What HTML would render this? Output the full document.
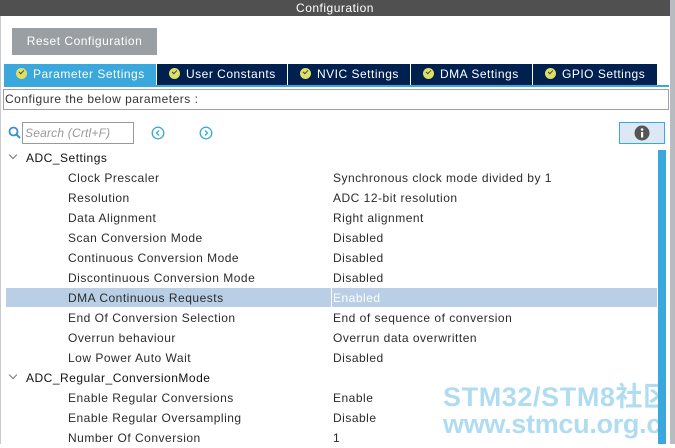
<!DOCTYPE html>
<html><head><meta charset="utf-8"><style>
*{margin:0;padding:0;box-sizing:border-box}
body{width:675px;height:444px;overflow:hidden;background:#fff;font-family:"Liberation Sans",sans-serif;position:relative;color:#2b2b2b;letter-spacing:0.5px}
.a{position:absolute;white-space:nowrap}
.title{left:0;top:0;width:670px;height:16px;background:#505050;color:#fff;font-size:12px;text-align:center;line-height:16px}
.tab{position:absolute;top:64px;height:21px;background:#002050;color:#fff;font-size:12px;line-height:21px;padding-left:12px}
.tab i{display:inline-block;width:11px;height:11px;border-radius:50%;background:#e0e060;vertical-align:-1px;margin-right:6px;position:relative}
.tab i:after{content:"";position:absolute;left:3px;top:2px;width:4px;height:2px;border-left:1.5px solid #446;border-bottom:1.5px solid #446;transform:rotate(-45deg)}
.row{position:absolute;left:0;height:20px;width:657px;font-size:12px;line-height:20px}
.row .k{position:absolute;left:68px}
.row .v{position:absolute;left:333px}
.g{position:absolute;left:26px;font-size:12px;line-height:20px;height:20px}
.chev{position:absolute;left:10px;width:6px;height:6px;border-right:1px solid #777;border-bottom:1px solid #777;transform:rotate(45deg)}
.wm{left:443px;font-size:27px;font-weight:bold;color:rgba(58,168,220,0.4);font-family:'Liberation Sans','Noto Sans CJK SC',sans-serif;line-height:30px;width:215px;overflow:hidden;letter-spacing:0.6px}
</style></head><body>
<div class="a" style="left:0;top:0;width:1px;height:444px;background:#c8ccd0"></div>
<div class="a title">Configuration</div>
<div class="a" style="left:670px;top:0;width:5px;height:444px;background:#b8bcc0"></div>
<div class="a" style="left:12px;top:28px;width:145px;height:27px;background:#9a9fa4;color:#fff;font-size:12px;line-height:27px;text-align:center">Reset Configuration</div>
<div class="tab" style="left:4px;width:152px;background:#3aa8dc"><i></i>Parameter Settings</div>
<div class="tab" style="left:157px;width:130px"><i></i>User Constants</div>
<div class="tab" style="left:288px;width:122px"><i></i>NVIC Settings</div>
<div class="tab" style="left:411px;width:121px"><i></i>DMA Settings</div>
<div class="tab" style="left:533px;width:124px"><i></i>GPIO Settings</div>
<div class="a" style="left:4px;top:85px;width:665px;height:2px;background:#3aa8dc"></div>
<div class="a" style="left:3px;top:89px;width:666px;height:21px;border:1px solid #a0a0a0;font-size:12px;line-height:19px;padding-left:1px;color:#333">Configure the below parameters :</div>
<svg class="a" style="left:8px;top:126px" width="14" height="14"><circle cx="5.5" cy="5.5" r="4" fill="none" stroke="#3a8fd0" stroke-width="1.8"/><path d="M8.5 8.5L12 12" stroke="#3a8fd0" stroke-width="2"/></svg>
<div class="a" style="left:22px;top:122px;width:112px;height:22px;border:1px solid #999;font-size:12px;line-height:20px;padding-left:2px;color:#999;font-style:italic;letter-spacing:0.2px">Search (Crtl+F)</div>
<svg class="a" style="left:151px;top:126px" width="14" height="14"><circle cx="7" cy="7" r="5.8" fill="none" stroke="#3aa8dc" stroke-width="1.3"/><path d="M8 4.5L5.5 7L8 9.5" fill="none" stroke="#3aa8dc" stroke-width="1.3"/></svg>
<svg class="a" style="left:199px;top:126px" width="14" height="14"><circle cx="7" cy="7" r="5.8" fill="none" stroke="#3aa8dc" stroke-width="1.3"/><path d="M6 4.5L8.5 7L6 9.5" fill="none" stroke="#3aa8dc" stroke-width="1.3"/></svg>
<div class="a" style="left:619px;top:122px;width:46px;height:22px;background:#dce8f4;border:1px solid #3aa8dc"></div>
<svg class="a" style="left:634px;top:125px" width="16" height="16"><circle cx="8" cy="8" r="7.5" fill="#555"/><rect x="7" y="7" width="2.2" height="5.5" fill="#fff"/><circle cx="8.1" cy="4.5" r="1.3" fill="#fff"/></svg>
<div class="a" style="left:658px;top:150px;width:8px;height:294px;background:#3aa8dc"></div>
<div class="a" style="left:6px;top:288px;width:651px;height:19px;background:#b8cfe6"></div>
<div class="a" style="left:331px;top:288px;width:1px;height:19px;background:#fff"></div>

<div class="chev" style="top:152px"></div><div class="g" style="top:148px;color:#111">ADC_Settings</div>
<div class="row" style="top:168px"><span class="k">Clock Prescaler</span><span class="v">Synchronous clock mode divided by 1</span></div>
<div class="row" style="top:188px"><span class="k">Resolution</span><span class="v">ADC 12-bit resolution</span></div>
<div class="row" style="top:208px"><span class="k">Data Alignment</span><span class="v">Right alignment</span></div>
<div class="row" style="top:228px"><span class="k">Scan Conversion Mode</span><span class="v">Disabled</span></div>
<div class="row" style="top:248px"><span class="k">Continuous Conversion Mode</span><span class="v">Disabled</span></div>
<div class="row" style="top:268px"><span class="k">Discontinuous Conversion Mode</span><span class="v">Disabled</span></div>
<div class="row" style="top:288px"><span class="k">DMA Continuous Requests</span><span class="v" style="color:#fff">Enabled</span></div>
<div class="row" style="top:308px"><span class="k">End Of Conversion Selection</span><span class="v">End of sequence of conversion</span></div>
<div class="row" style="top:328px"><span class="k">Overrun behaviour</span><span class="v">Overrun data overwritten</span></div>
<div class="row" style="top:348px"><span class="k">Low Power Auto Wait</span><span class="v">Disabled</span></div>
<div class="chev" style="top:372px"></div><div class="g" style="top:368px;color:#111">ADC_Regular_ConversionMode</div>
<div class="row" style="top:388px"><span class="k">Enable Regular Conversions</span><span class="v">Enable</span></div>
<div class="row" style="top:408px"><span class="k">Enable Regular Oversampling</span><span class="v">Disable</span></div>
<div class="row" style="top:428px"><span class="k">Number Of Conversion</span><span class="v">1</span></div>

<div class="a wm" style="top:382px">STM32/STM8社区</div>
<div class="a wm" style="top:409px;letter-spacing:-0.3px">www.stmcu.org.cn</div>
</body></html>
